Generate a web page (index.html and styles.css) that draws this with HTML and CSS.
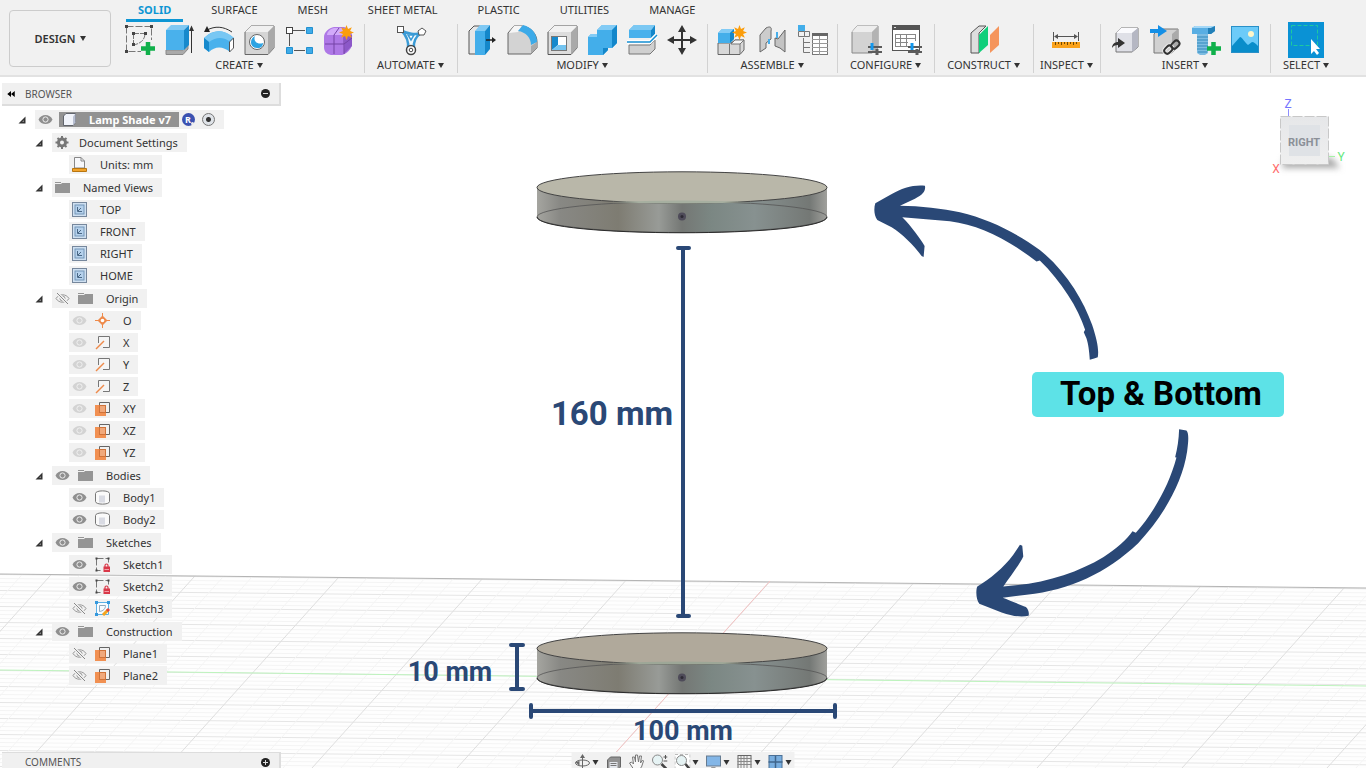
FILE: index.html
```html
<!DOCTYPE html>
<html lang="en">
<head>
  <meta charset="UTF-8" />
  <meta name="viewport" content="width=device-width, initial-scale=1.0" />
  <title>Lamp Shade v7</title>
  <link rel="stylesheet" href="styles.css">
</head>
<body>
  <!-- Shared icons -->
  <svg class="sprite" aria-hidden="true">
    <symbol id="eye" viewBox="0 0 15 15"><path d="M0.500 7.500C3 1.500 12 1.500 14.500 7.500C12 13.500 3 13.500 0.500 7.500Z" fill="#8f8f8f"/><circle cx="7.500" cy="7.500" r="2.600" fill="#8f8f8f" stroke="#eee"/></symbol>
    <symbol id="eye-off" viewBox="0 0 15 15"><path d="M1 7.500C4 2.500 11 2.500 14 7.500C11 12.500 4 12.500 1 7.500Z" fill="none" stroke="#999"/><circle cx="7.500" cy="7.500" r="2.500" fill="none" stroke="#999"/><path d="M2 2L13 13" stroke="#f1f1f1" stroke-width="3"/><path d="M2 2L13 13" stroke="#888"/></symbol>
    <symbol id="folder" viewBox="0 0 15 15"><path d="M0 2h6v1H0zM0 4h6l1-1h8v10H0z" fill="#959595"/></symbol>
    <symbol id="arrow" viewBox="0 0 8 8"><path d="M7.500 0.500V7.500H0.500Z" fill="#333"/><path d="M6 4V6H4Z" fill="#888"/></symbol>
    <symbol id="view" viewBox="0 0 15 15"><rect x="0.500" y="0.500" width="14" height="14" fill="#cfe0f1" stroke="#76879c"/><rect x="3" y="3" width="9" height="9" fill="#b5d1ec" stroke="#7496b8"/><path d="M5.500 5V9.500H10M6 9L9 6" fill="none" stroke="#4a6886"/></symbol>
    <symbol id="axis" viewBox="0 0 15 15"><path d="M3.500 8V1.500H14.500V12.500H8" fill="#f5f5f5" stroke="#777"/><path d="M1 14L9 6" stroke="#ee8a4b" stroke-width="1.500"/></symbol>
    <symbol id="plane" viewBox="0 0 15 15"><path d="M4.500 5V1.500H14.500V11.500H11" fill="none" stroke="#666"/><rect x="0" y="4" width="11" height="11" fill="#f19052"/><rect x="4.500" y="4.500" width="6" height="7" fill="#f0a97c" stroke="#d0733a"/></symbol>
    <symbol id="body" viewBox="0 0 15 15"><path d="M0.500 3.500C0.500 0 14.500 0 14.500 3.500V11.500C14.500 15 0.500 15 0.500 11.500Z" fill="#fafafa" stroke="#777"/><path d="M4 5.500H10V12.500H4Z" fill="#d9dbe3"/></symbol>
    <symbol id="sketch" viewBox="0 0 15 15"><path d="M1.500 1.500H13.500V7M1.500 1.500V13.500H7" fill="none" stroke="#777" stroke-dasharray="7 2"/><path d="M0.500 0.500h2v2h-2zM12.500 0.500h2v2h-2zM0.500 12.500h2v2h-2z" fill="#444"/><path d="M10 10V8.500C10 6.500 13 6.500 13 8.500V10" fill="none" stroke="#d93848" stroke-width="1.200"/><rect x="8.500" y="9.500" width="6.500" height="5.500" fill="#d93848"/><path d="M9.500 12.500h4.500" stroke="#f2a0a8"/></symbol>
    <symbol id="mini-cube" viewBox="0 0 15 15"><path d="M1.500 4L4 1.500H13.500V10.500L11 13.500H1.500Z" fill="#f0f3fa" stroke="#60646c"/><path d="M11 4.500L13.500 1.500V10.500L11 13.500Z" fill="#b9c0d2"/></symbol>
    <symbol id="star" viewBox="0 0 16 16"><path d="M8 0L9.600 4.200L13.700 2.300L11.800 6.400L16 8L11.800 9.600L13.700 13.700L9.600 11.800L8 16L6.400 11.800L2.300 13.700L4.200 9.600L0 8L4.200 6.400L2.300 2.300L6.400 4.200Z" fill="#fb9d0b"/></symbol>
    <symbol id="sliders" viewBox="0 0 14 12"><path d="M0 4H14M0 9H14" stroke="#5b5b5b" stroke-width="2"/><path d="M4 0V7" stroke="#1398ee" stroke-width="3"/><path d="M9 6V12" stroke="#5b5b5b" stroke-width="3"/></symbol>
  </svg>

  <header class="toolbar">
    <button class="workspace-button">DESIGN <span class="caret"></span></button>
    <div class="ribbon">
      <nav class="tabs">
        <a href="#" class="tab active">SOLID</a>
        <a href="#" class="tab">SURFACE</a>
        <a href="#" class="tab">MESH</a>
        <a href="#" class="tab">SHEET METAL</a>
        <a href="#" class="tab">PLASTIC</a>
        <a href="#" class="tab">UTILITIES</a>
        <a href="#" class="tab">MANAGE</a>
      </nav>
      <div class="groups">
        <div class="group">
          <div class="tools">
            <button class="tool" aria-label="Create sketch"><svg viewBox="0 0 32 32"><path d="M3.500 2.500H28.500V16M3.500 2.500V27.500H18" fill="none" stroke="#777" stroke-dasharray="7 2"/><path d="M10.500 21V9.500H22C22 16 17 20 10 21Z" fill="none" stroke="#777" stroke-dasharray="5 1"/><path d="M2 1h3v3h-3zM27 1h3v3h-3zM2 26h3v3h-3zM9 8h3v3h-3zM21 8h3v3h-3zM9 19h3v3h-3z" fill="#444"/><path d="M25 18V31M18 24.500H32" stroke="#10b04b" stroke-width="4.500"/></svg></button>
            <button class="tool" aria-label="Extrude"><svg viewBox="0 0 32 32"><path d="M3 26H20L25 21V25L20 30.500H3Z" fill="#aaa" stroke="#888"/><path d="M3 6L8 1H26L21 6Z" fill="#80c9f3"/><path d="M3 6H21V26H3Z" fill="#49b1ec"/><path d="M21 6L26 1V21L21 26Z" fill="#1689cc"/><path d="M28.500 29V5" stroke="#333"/><path d="M26 7L28.500 1.500L31 7Z" fill="#333"/></svg></button>
            <button class="tool" aria-label="Revolve"><svg viewBox="0 0 32 32"><path d="M1 14L6 10C13 6 21 6 28 12L31 14L27 28C20 22 12 22 6 28L1 24Z" fill="#49b1ec"/><path d="M1 14L6 18C13 13 20 13 26 17L31 14C22 5 10 5 1 14Z" fill="#78c7f3"/><path d="M6 18V28L1 24V14Z" fill="#1689cc"/><path d="M26.500 18L30.500 14V24L26.500 28Z" fill="#fff" stroke="#555"/><path d="M4 6C12 2 20 2 29 8" fill="none" stroke="#333"/><path d="M1 8L4 2L7 8Z" fill="#222"/></svg></button>
            <button class="tool" aria-label="Hole"><svg viewBox="0 0 32 32"><path d="M2 8L8 2H31V24L25 30.500H2Z" fill="#d5d5d5" stroke="#666"/><path d="M2 8L8 2H31L25 8Z" fill="#f0f0f0"/><path d="M25 8L31 2V24L25 30Z" fill="#a9a9a9"/><circle cx="14" cy="18" r="7.500" fill="#fff" stroke="#666"/><path d="M12 12C5 16 8 25 15 24C18 24 20 22 20 19C14 21 10 17 12 12Z" fill="#2da3e2"/></svg></button>
            <button class="tool" aria-label="Pattern"><svg viewBox="0 0 32 32"><path d="M10 6.500H22M6.500 10V22M11 26.500H22" stroke="#555"/><rect x="3.500" y="3.500" width="6" height="6" fill="#fff" stroke="#444"/><path d="M23.500 3.500h6v6h-6zM23.500 23.500h6v6h-6zM3.500 23.500h6v6h-6z" fill="#3eabe8" stroke="#2390cf"/></svg></button>
            <button class="tool" aria-label="Create form"><svg viewBox="0 0 32 32"><path d="M1 13C1 8 6 4 11 3H21C27 5 30 9 29 14V21C28 26 23 30 19 31H8C3 30 1 27 1 23Z" fill="#ae78e6"/><path d="M11 4H20L23 11H4C4 8 7 5 11 4Z" fill="#d2aafa"/><path d="M22 12L29 11V22L21 30Z" fill="#8c58c8"/><path d="M2 20H21L29 14M11 30V11L16 4M21 30V12L26 6" fill="none" stroke="#7443a6"/><use href="#star" x="16" y="1" width="15" height="15"/></svg></button>
          </div>
          <button class="group-label">CREATE <span class="caret"></span></button>
        </div>
        <div class="group">
          <div class="tools">
            <button class="tool" aria-label="Automate"><svg viewBox="0 0 32 32"><path d="M6 6C12 10 21 11 26 9C20 13 18 18 19 25H13C14 18 12 12 6 6Z" fill="#f4fafd" stroke="#3a9bd6" stroke-width="2.500"/><path d="M13 11H19L16 16Z" fill="#fff" stroke="#3a9bd6" stroke-width="1.500"/><rect x="2.500" y="2.500" width="6" height="6" fill="#fff" stroke="#555"/><path d="M27 4L31 7L29 11L24 11L23 7Z" fill="#fff" stroke="#555"/><circle cx="16" cy="26" r="4.500" fill="#fff" stroke="#444" stroke-width="1.500"/><circle cx="16" cy="26" r="1.800" fill="none" stroke="#444"/></svg></button>
          </div>
          <button class="group-label">AUTOMATE <span class="caret"></span></button>
        </div>
        <div class="group">
          <div class="tools">
            <button class="tool" aria-label="Press pull"><svg viewBox="0 0 32 32"><path d="M3 7L8 2H15L10 7V30H3Z" fill="#e7e7e7" stroke="#555"/><path d="M9 7L14 1H24L19 7Z" fill="#7fc9f4"/><path d="M9 7H19V31H9Z" fill="#43aeea"/><path d="M19 7L24 1V25L19 31Z" fill="#1487ca"/><path d="M20 16H27" stroke="#222" stroke-width="1.500"/><path d="M26 13L30 16L26 19Z" fill="#222"/></svg></button>
            <button class="tool" aria-label="Fillet"><svg viewBox="0 0 32 32"><path d="M2 30V9L8 2H16C25 3 31 10 31 18V24L25 30Z" fill="#d3d3d3" stroke="#666"/><path d="M3 9L8 2H16L12 8Z" fill="#f6f6f6"/><path d="M12 7L17 1C26 3 31 10 31 18L25 21C25 14 20 8 12 7Z" fill="#3caae8"/><path d="M25 22L31 18V24L25 30Z" fill="#aaa"/></svg></button>
            <button class="tool" aria-label="Shell"><svg viewBox="0 0 32 32"><path d="M2 8L8 2H31V24L25 30.500H2Z" fill="#ddd" stroke="#555"/><path d="M25 8L31 2V24L25 30Z" fill="#aaa"/><path d="M2 8L8 2H31L25 8Z" fill="#f2f2f2"/><rect x="5.500" y="12.500" width="15" height="14" fill="#fff" stroke="#777"/><path d="M6 13L12 13V21L6 26Z" fill="#1689cc"/><path d="M12 21H20V26H6Z" fill="#74c4f0"/></svg></button>
            <button class="tool" aria-label="Combine"><svg viewBox="0 0 32 32"><path d="M2 13L5 10H11V6L16 1H31V19L26 24H22V26L17 31H2Z" fill="#43aeea"/><path d="M11 6L16 1H31L26 6ZM2 13L5 10H11V13Z" fill="#82cbf5"/><path d="M26 6L31 1V19L26 24ZM17 24H22V26L17 31Z" fill="#1487ca"/></svg></button>
            <button class="tool" aria-label="Split"><svg viewBox="0 0 32 32"><path d="M3 6L8 1H29L25 6V14H3Z" fill="#49b1ec"/><path d="M25 6L29 1V10L25 14Z" fill="#1487ca"/><path d="M3 6L8 1H29L25 6Z" fill="#7bc8f3"/><path d="M3 21H24L29 16V25L24 30H3Z" fill="#d0d0d0" stroke="#777"/><path d="M1 18H24L31 11" fill="none" stroke="#fff" stroke-width="4"/><path d="M1 18H24L31 11" fill="none" stroke="#158fd2" stroke-width="1.500"/></svg></button>
            <button class="tool" aria-label="Move"><svg viewBox="0 0 32 32"><path d="M16 6V26M6 16H26" stroke="#333" stroke-width="2"/><path d="M12 8L16 1L20 8ZM12 24L16 31L20 24ZM8 12L1 16L8 20ZM24 12L31 16L24 20Z" fill="#333"/></svg></button>
          </div>
          <button class="group-label">MODIFY <span class="caret"></span></button>
        </div>
        <div class="group">
          <div class="tools">
            <button class="tool" aria-label="New component"><svg viewBox="0 0 32 32"><path d="M2 19H15L19 16H28V26L24 30.500H2Z" fill="#d8d8d8" stroke="#666"/><path d="M15 20L19 16H28L24 20Z" fill="#f6f6f6" stroke="#777"/><path d="M13.500 20V30M24 20V30" stroke="#777"/><path d="M2 9L6 5H18V15L14 19H2Z" fill="#43aeea"/><path d="M2 9L6 5H18L14 9Z" fill="#82cbf5"/><path d="M14 9L18 5V15L14 19Z" fill="#1487ca"/><use href="#star" x="16" y="1" width="15" height="15"/></svg></button>
            <button class="tool" aria-label="Joint"><svg viewBox="0 0 32 32"><path d="M4 11L10 4C14 2 16 3 15 7V15L10 19V24L4 28Z" fill="#ccc" stroke="#666"/><path d="M29 6V28L24 24L19 22V14L22 15Z" fill="#c3c3c3" stroke="#666"/><path d="M13 15V20M21 8V14" stroke="#48aeea" stroke-width="2"/></svg></button>
            <button class="tool" aria-label="Joint table"><svg viewBox="0 0 32 32"><rect x="2" y="1" width="7" height="6" fill="#43aeea"/><path d="M2.500 7.500h6v5h-6zM8.500 7.500h5v5h-5zM7.500 14V28.500H14M7 18.500H14M7 23.500H14" fill="none" stroke="#777"/><rect x="16.500" y="9.500" width="15" height="21" fill="#fff" stroke="#777"/><path d="M16 9h16v3H16z" fill="#666"/><path d="M16 15.500H32M16 19.500H32M16 23.500H32M16 27.500H32M23.500 12V31" stroke="#999"/></svg></button>
          </div>
          <button class="group-label">ASSEMBLE <span class="caret"></span></button>
        </div>
        <div class="group">
          <div class="tools">
            <button class="tool" aria-label="Configure model"><svg viewBox="0 0 32 32"><path d="M2 8L7 2H28V24L22 29H2Z" fill="#d3d3d3" stroke="#888"/><path d="M2 8L7 2H28L22 8Z" fill="#eee"/><path d="M22 8L28 2V24L22 29Z" fill="#b3b3b3"/><use href="#sliders" x="18" y="19" width="14" height="12"/></svg></button>
            <button class="tool" aria-label="Configuration table"><svg viewBox="0 0 32 32"><rect x="2.500" y="1.500" width="27" height="25" fill="#fff" stroke="#555"/><path d="M2 1h28v5H2z" fill="#555"/><path d="M4 3.500H6" stroke="#ddd"/><path d="M5 10.500H26M5 14.500H26M5 18.500H18M5 22.500H18M5.500 10V23M10.500 10V23M16.500 10V23M25.500 10V17" fill="none" stroke="#888"/><use href="#sliders" x="18" y="19" width="14" height="12"/></svg></button>
          </div>
          <button class="group-label">CONFIGURE <span class="caret"></span></button>
        </div>
        <div class="group">
          <div class="tools">
            <button class="tool" aria-label="Offset plane"><svg viewBox="0 0 32 32"><path d="M3 9L11 2H18L11 9V29H3Z" fill="#dedede" stroke="#555"/><path d="M11 11L20 2V21L11 29Z" fill="#10cf7b"/><path d="M22 11L31 2V21L22 29Z" fill="#f5955c"/></svg></button>
          </div>
          <button class="group-label">CONSTRUCT <span class="caret"></span></button>
        </div>
        <div class="group compact">
          <div class="tools">
            <button class="tool" aria-label="Measure"><svg viewBox="0 0 32 32"><path d="M3.500 8V17M28.500 8V17M5 12.500H27" stroke="#555"/><path d="M4 12.500L8 10V15ZM28 12.500L24 10V15Z" fill="#555"/><rect x="2" y="18" width="28" height="6" fill="#faa21b"/><path d="M5.500 18v3M8.500 18v2M11.500 18v3M14.500 18v2M17.500 18v3M20.500 18v2M23.500 18v3M26.500 18v2" stroke="#704800"/></svg></button>
          </div>
          <button class="group-label">INSPECT <span class="caret"></span></button>
        </div>
        <div class="group">
          <div class="tools">
            <button class="tool" aria-label="Insert derive"><svg viewBox="0 0 32 32"><path d="M7 9L12 4H29V23L23 28H7Z" fill="#dfe0e7" stroke="#777"/><path d="M7 9L12 4H29L23 9Z" fill="#fafafd"/><path d="M23 9L29 4V23L23 28Z" fill="#b5b7c3"/><path d="M3 24C3 20 6 18 9 18V14L16 19L9 24V21C6 21 4 22 3 24Z" fill="#333"/></svg></button>
            <button class="tool" aria-label="Insert link"><svg viewBox="0 0 32 32"><path d="M5 10L10 5H29V22L23 29H5Z" fill="#d1d1d1" stroke="#777"/><path d="M23 10L29 5V22L23 29Z" fill="#aaa"/><path d="M1 7H10" stroke="#148fe6" stroke-width="4"/><path d="M9 1L18 7L9 13Z" fill="#148fe6"/><g fill="none"><rect x="15" y="23" width="9" height="6" rx="3" transform="rotate(-45 19 26)" stroke="#eee" stroke-width="4"/><rect x="15" y="23" width="9" height="6" rx="3" transform="rotate(-45 19 26)" stroke="#333" stroke-width="2"/><rect x="22" y="18" width="9" height="6" rx="3" transform="rotate(-45 26 21)" stroke="#333" stroke-width="2"/></g></svg></button>
            <button class="tool" aria-label="Insert fastener"><svg viewBox="0 0 32 32"><path d="M3 4L6 2H26V7L22 10H3Z" fill="#59aee3"/><path d="M3 4L6 2H26L22 4Z" fill="#a5d8f7"/><path d="M19 4H22L26 2V7L22 10H19Z" fill="#2380b8"/><path d="M8 10H19V29L16 31H11L8 29Z" fill="#7dbce2"/><path d="M8 13H19M8 16H19M8 19H19M8 22H19M8 25H19M9 28H18" stroke="#3389bc"/><path d="M24.500 18V31M18 24.500H32" stroke="#10b04b" stroke-width="4.500"/></svg></button>
            <button class="tool" aria-label="Insert image"><svg viewBox="0 0 32 32"><rect x="2.500" y="2.500" width="27" height="26" fill="#6ccbf9" stroke="#2990c8"/><circle cx="22" cy="10" r="3" fill="#fff6c9"/><path d="M3 22L11 13C13 13 17 20 19 21L23 18C25 18 27 20 29 22V28H3Z" fill="#098dca"/></svg></button>
          </div>
          <button class="group-label">INSERT <span class="caret"></span></button>
        </div>
        <div class="group">
          <div class="tools">
            <button class="tool selected" aria-label="Select"><svg viewBox="0 0 36 36"><rect x="3.500" y="3.500" width="26" height="20" fill="none" stroke="#1dc9a0" stroke-dasharray="4 2"/><path d="M23 17V32L26 29L29 33L31 31L28 27H32Z" fill="#fff"/></svg></button>
          </div>
          <button class="group-label">SELECT <span class="caret"></span></button>
        </div>
      </div>
    </div>
  </header>

  <main class="workspace">
    <!-- Model canvas -->
    <svg class="canvas" viewBox="0 77 1366 691" preserveAspectRatio="xMidYMid slice">
      <defs>
        <linearGradient id="side">
          <stop offset="0" stop-color="#a5a5a0"/><stop offset="0.080" stop-color="#888884"/><stop offset="0.280" stop-color="#7e7c72"/><stop offset="0.420" stop-color="#989b97"/><stop offset="0.500" stop-color="#747774"/><stop offset="0.600" stop-color="#7b8783"/><stop offset="0.750" stop-color="#879190"/><stop offset="0.940" stop-color="#747875"/><stop offset="1" stop-color="#a0a09c"/>
        </linearGradient>
        <pattern id="rows" width="1366" height="16" y="574" patternUnits="userSpaceOnUse" patternTransform="skewY(0.600)">
          <path d="M0 4.500H1366M0 8.500H1366M0 12.500H1366" stroke="#f4f4f4"/>
          <path d="M0 0.500H1366" stroke="#e5e5e5"/>
        </pattern>
        <pattern id="columns" width="145" height="200" x="568" patternUnits="userSpaceOnUse" patternTransform="skewX(-42)">
          <path d="M29.500 0V200M58.500 0V200M87.500 0V200M116.500 0V200" stroke="#f4f4f4"/>
          <path d="M0.500 0V200" stroke="#dedede"/>
        </pattern>
        <g id="disc">
          <path d="M537 188V217C537 238 827 238 827 217V188Z" fill="url(#side)"/>
          <ellipse cx="682" cy="217" rx="145" ry="15.500" fill="none" stroke="#555" stroke-width="0.800"/>
          <path d="M537 217C540 238 824 238 827 217" fill="none" stroke="#2c2c2c"/>
        </g>
      </defs>
      <path d="M0 574L1366 588V768H0Z" fill="#fefefe"/>
      <path d="M0 574L1366 588V768H0Z" fill="url(#rows)"/>
      <path d="M0 574L1366 588V768H0Z" fill="url(#columns)"/>
      <path d="M0 574L1366 588" stroke="#b4b4b4"/>
      <path d="M0 670L1366 686" stroke="#bdf3bd"/>
      <path d="M770 581L602 768" stroke="#f5c3c3"/>

      <use href="#disc"/>
      <ellipse cx="682" cy="187.500" rx="145" ry="15.700" fill="#b9b7a9" stroke="#444"/>
      <path d="M610 202Q682 199 750 202Q682 205 610 202Z" fill="#a6afa0"/>
      <circle cx="682" cy="216.500" r="4" fill="#4e4b59"/><circle cx="682" cy="216.500" r="1.500" fill="#2c2933"/>
      <use href="#disc" y="461"/>
      <ellipse cx="682" cy="648.500" rx="145" ry="15.700" fill="#b0a99b" stroke="#444"/>
      <path d="M610 663Q682 660 750 663Q682 666 610 663Z" fill="#9da797"/>
      <circle cx="682" cy="677.500" r="4" fill="#4e4b59"/><circle cx="682" cy="677.500" r="1.500" fill="#2c2933"/>

      <!-- Dimensions -->
      <g class="dimension">
        <path d="M683 248V616M678 248H689M678 616H689"/>
        <path d="M517 645V689M511 645H523M511 689H523"/>
        <path d="M531 711H835M531 705V717M835 705V717"/>
      </g>
      <text class="measure large" x="612" y="425">160 mm</text>
      <text class="measure" x="450" y="681">10 mm</text>
      <text class="measure" x="683" y="740">100 mm</text>

      <!-- Callout -->
      <path class="pointer" transform="translate(860 170) scale(0.333)" d="M46 100L90 75C130 52 160 44 195 47C198 62 190 74 165 86L120 107C180 108 250 115 300 127C390 148 470 190 540 240C620 305 670 390 697 465C712 510 718 540 714 562L703 566L690 570C689 545 685 520 680 505L672 487L676 480C655 415 605 335 540 272L530 275C450 212 360 165 270 154L127 142C155 170 180 205 194 228L191 261L185 258C160 225 125 190 95 172L52 150C42 138 41 115 46 100Z"/>
      <path class="pointer" transform="translate(960 360) scale(0.333)" d="M658 208L680 212C688 220 686 245 682 275C668 370 610 470 535 550C440 640 330 690 200 705L128 714C150 722 180 735 198 742C206 750 208 760 206 768C185 773 160 770 125 758L58 732C48 720 47 690 52 680C90 658 130 625 160 585L180 555L187 558L190 590C180 612 155 645 130 680C250 672 350 640 430 592C470 566 500 540 518 514L528 519C585 455 630 370 650 293L646 292C653 265 657 240 658 208Z"/>
      <rect x="1032" y="372" width="252" height="45" rx="5" fill="#5de2e7"/>
      <text class="callout" x="1161" y="405">Top &amp; Bottom</text>
    </svg>

    <aside class="sidebar">
      <div class="panel-header">
        <svg class="collapse" viewBox="0 0 10 8"><path d="M5 0V8L0 4ZM10 0V8L5 4Z"/></svg>
        <h2>BROWSER</h2>
        <button class="panel-button" aria-label="Minimize browser"><svg viewBox="0 0 9 9"><circle cx="4.500" cy="4.500" r="4.500"/><path d="M2 4.500H7" stroke="#ddd"/></svg></button>
      </div>

      <ul class="tree">
        <li>
          <div class="row">
            <button class="toggle" aria-label="Collapse"><svg><use href="#arrow"/></svg></button>
            <div class="chip root">
              <svg class="icon"><use href="#eye"/></svg>
              <span class="document"><svg class="icon"><use href="#mini-cube"/></svg>Lamp Shade v7</span>
              <svg class="badge" viewBox="0 0 13 13"><circle cx="6.500" cy="6.500" r="6.500" fill="#3b51b0"/><text x="6" y="10">R</text><circle cx="10.500" cy="10.500" r="1.500" fill="#eee"/></svg>
              <input type="radio" class="activate" aria-label="Activate component" checked>
            </div>
          </div>
          <ul class="level-one">
            <li>
              <div class="row">
                <button class="toggle" aria-label="Collapse"><svg><use href="#arrow"/></svg></button>
                <div class="chip settings"><svg class="icon" viewBox="0 0 15 15"><circle cx="7" cy="7.500" r="3.500" fill="none" stroke="#777" stroke-width="3"/><path d="M7 1V4M7 11V14M0.500 7.500H3M11 7.500H13.500M2.500 3L4 4.500M10 10.500L11.500 12M11.500 3L10 4.500M2.500 12L4 10.500" stroke="#777" stroke-width="2"/></svg>Document Settings</div>
              </div>
              <ul class="level-two">
                <li class="chip"><svg class="icon" viewBox="0 0 15 15"><path d="M2.500 11V0.500H9L12.500 4V11Z" fill="#f7f8fb" stroke="#888"/><path d="M9 0.500V4H12.500" fill="none" stroke="#888"/><path d="M0.500 11.500H14.500V14.500H0.500Z" fill="#f2a32a" stroke="#b87611"/></svg>Units: mm</li>
              </ul>
            </li>
            <li>
              <div class="row">
                <button class="toggle" aria-label="Collapse"><svg><use href="#arrow"/></svg></button>
                <div class="chip"><svg class="icon"><use href="#folder"/></svg>Named Views</div>
              </div>
              <ul class="level-two">
                <li class="chip"><svg class="icon"><use href="#view"/></svg>TOP</li>
                <li class="chip"><svg class="icon"><use href="#view"/></svg>FRONT</li>
                <li class="chip"><svg class="icon"><use href="#view"/></svg>RIGHT</li>
                <li class="chip"><svg class="icon"><use href="#view"/></svg>HOME</li>
              </ul>
            </li>
            <li>
              <div class="row">
                <button class="toggle" aria-label="Collapse"><svg><use href="#arrow"/></svg></button>
                <div class="chip"><svg class="icon eye"><use href="#eye-off"/></svg><svg class="icon"><use href="#folder"/></svg>Origin</div>
              </div>
              <ul class="level-two">
                <li class="chip"><svg class="icon eye faded"><use href="#eye"/></svg><svg class="icon" viewBox="0 0 15 15"><path d="M7.500 0V15M0 7.500H15" stroke="#ee8a4b"/><path d="M7.500 2.500L12.500 7.500L7.500 12.500L2.500 7.500Z" fill="#ee8a4b"/><circle cx="7.500" cy="7.500" r="1.800" fill="#fff"/></svg>O</li>
                <li class="chip"><svg class="icon eye faded"><use href="#eye"/></svg><svg class="icon"><use href="#axis"/></svg>X</li>
                <li class="chip"><svg class="icon eye faded"><use href="#eye"/></svg><svg class="icon"><use href="#axis"/></svg>Y</li>
                <li class="chip"><svg class="icon eye faded"><use href="#eye"/></svg><svg class="icon"><use href="#axis"/></svg>Z</li>
                <li class="chip"><svg class="icon eye faded"><use href="#eye"/></svg><svg class="icon"><use href="#plane"/></svg>XY</li>
                <li class="chip"><svg class="icon eye faded"><use href="#eye"/></svg><svg class="icon"><use href="#plane"/></svg>XZ</li>
                <li class="chip"><svg class="icon eye faded"><use href="#eye"/></svg><svg class="icon"><use href="#plane"/></svg>YZ</li>
              </ul>
            </li>
            <li>
              <div class="row">
                <button class="toggle" aria-label="Collapse"><svg><use href="#arrow"/></svg></button>
                <div class="chip"><svg class="icon eye"><use href="#eye"/></svg><svg class="icon"><use href="#folder"/></svg>Bodies</div>
              </div>
              <ul class="level-two">
                <li class="chip"><svg class="icon eye"><use href="#eye"/></svg><svg class="icon"><use href="#body"/></svg>Body1</li>
                <li class="chip"><svg class="icon eye"><use href="#eye"/></svg><svg class="icon"><use href="#body"/></svg>Body2</li>
              </ul>
            </li>
            <li>
              <div class="row">
                <button class="toggle" aria-label="Collapse"><svg><use href="#arrow"/></svg></button>
                <div class="chip"><svg class="icon eye"><use href="#eye"/></svg><svg class="icon"><use href="#folder"/></svg>Sketches</div>
              </div>
              <ul class="level-two">
                <li class="chip"><svg class="icon eye"><use href="#eye"/></svg><svg class="icon"><use href="#sketch"/></svg>Sketch1</li>
                <li class="chip"><svg class="icon eye"><use href="#eye"/></svg><svg class="icon"><use href="#sketch"/></svg>Sketch2</li>
                <li class="chip"><svg class="icon eye"><use href="#eye-off"/></svg><svg class="icon" viewBox="0 0 15 15"><path d="M1.500 1.500H13.500V13.500H1.500Z" fill="#f7fbff" stroke="#5ab0e6"/><path d="M4.500 10.500V4.500H10.500C10.500 8 8 10 4.500 10.500Z" fill="none" stroke="#8fa9bd"/><path d="M0 0h3v3H0zM12 0h3v3h-3zM0 12h3v3H0z" fill="#3598dc"/><path d="M8 14L13 9" stroke="#f4a51f" stroke-width="3"/><path d="M12 10L14 8" stroke="#e0453f" stroke-width="3"/></svg>Sketch3</li>
              </ul>
            </li>
            <li>
              <div class="row">
                <button class="toggle" aria-label="Collapse"><svg><use href="#arrow"/></svg></button>
                <div class="chip"><svg class="icon eye"><use href="#eye"/></svg><svg class="icon"><use href="#folder"/></svg>Construction</div>
              </div>
              <ul class="level-two">
                <li class="chip"><svg class="icon eye"><use href="#eye-off"/></svg><svg class="icon"><use href="#plane"/></svg>Plane1</li>
                <li class="chip"><svg class="icon eye"><use href="#eye-off"/></svg><svg class="icon"><use href="#plane"/></svg>Plane2</li>
              </ul>
            </li>
          </ul>
        </li>
      </ul>

      <div class="panel-header comments">
        <h2>COMMENTS</h2>
        <button class="panel-button" aria-label="Expand comments"><svg viewBox="0 0 9 9"><circle cx="4.500" cy="4.500" r="4.500"/><path d="M2 4.500H7M4.500 2V7" stroke="#ddd"/></svg></button>
      </div>
    </aside>

    <svg class="view-cube" viewBox="0 0 80 84">
      <defs>
        <linearGradient id="cube-face" x2="0" y2="1"><stop offset="0" stop-color="#e6e7e9"/><stop offset="1" stop-color="#efefef"/></linearGradient>
        <filter id="cube-shadow" x="-20%" y="-100%" width="140%" height="300%"><feGaussianBlur stdDeviation="3"/></filter>
      </defs>
      <path d="M18 62H66L74 72H16Z" fill="#aaa" filter="url(#cube-shadow)"/>
      <path d="M22.500 13V20" stroke="#8e8eff"/><path d="M63 60.500H69" stroke="#a6f0a6"/>
      <rect x="14.500" y="20.500" width="48" height="48" fill="url(#cube-face)" stroke="#c8c8c8" stroke-dasharray="10 2"/>
      <rect x="23" y="29" width="31" height="31" fill="#dfe2e6"/>
      <text x="38" y="50" class="cube-label">RIGHT</text>
      <text x="22" y="12" fill="#7474ff">Z</text>
      <text x="10" y="77" fill="#ff6c6c">X</text>
      <text x="75" y="65" fill="#66e87e">Y</text>
    </svg>

    <div class="nav-bar">
      <button aria-label="Orbit"><svg viewBox="0 0 16 16"><ellipse cx="8" cy="9" rx="7" ry="3" fill="none" stroke="#666"/><path d="M8 2V15" stroke="#666"/><path d="M5.500 4L8 0L10.500 4ZM1 8L5 7V12Z" fill="#666"/></svg><span class="caret"></span></button>
      <button aria-label="Look at"><svg viewBox="0 0 16 16"><path d="M2 6L5 3H15V13L13 15H2Z" fill="#929292" stroke="#666"/><path d="M4 8H12V14H4Z" fill="#e3e6ec"/><path d="M5 9.500H11M5 11.500H11" stroke="#777"/></svg></button>
      <button aria-label="Pan"><svg viewBox="0 0 16 16"><path d="M5 15L1 9L3 8L5 10L4 3L6 3L7 8L7 1H9L10 8L11 2H13L12 9L14 6L15 7L13 13L11 15Z" fill="#f8f8f8" stroke="#777"/></svg></button>
      <button aria-label="Zoom"><svg viewBox="0 0 16 16"><circle cx="6" cy="6" r="5" fill="#e6f3f4" stroke="#888"/><path d="M10 10L15 15" stroke="#444" stroke-width="2.500"/><path d="M12 3H16M14 1V5M12 7H16" stroke="#555"/></svg></button>
      <button aria-label="Fit"><svg viewBox="0 0 16 16"><path d="M0.500 0.500H15.500V15.500H0.500Z" fill="#fff" stroke="#bbb" stroke-dasharray="3 2"/><circle cx="7" cy="6.500" r="5" fill="#e6f3f4" stroke="#888"/><path d="M11 10L15 15" stroke="#444" stroke-width="2.500"/></svg><span class="caret"></span></button>
      <button aria-label="Display settings"><svg viewBox="0 0 16 16"><rect x="1" y="2" width="14" height="10" fill="#83b6e7" stroke="#667b90"/><path d="M6 13H10V15H5" fill="#999"/></svg><span class="caret"></span></button>
      <button aria-label="Grid and snaps"><svg viewBox="0 0 16 16"><rect x="1.500" y="1.500" width="13" height="14" fill="#eee" stroke="#666"/><path d="M4.500 2V16M7.500 2V16M10.500 2V16M1 4.500H15M1 7.500H15M1 10.500H15" stroke="#888"/></svg><span class="caret"></span></button>
      <button aria-label="Viewports"><svg viewBox="0 0 16 16"><rect x="1.500" y="1.500" width="13" height="13" fill="#79aedf" stroke="#4b7096"/><path d="M8 2V15M1 8H15" stroke="#3f658c" stroke-width="1.500"/></svg><span class="caret"></span></button>
    </div>
  </main>
</body>
</html>
```
FILE: styles.css
```css
* {
  margin: 0;
  padding: 0;
  box-sizing: border-box;
}

body {
  font-family: 'Noto Sans', sans-serif;
  font-size: 11px;
  color: #333;
  background: #fff;
  display: flex;
  flex-direction: column;
  height: 100vh;
  overflow: hidden;
}

button {
  font: inherit;
  color: inherit;
  background: none;
  border: none;
  cursor: pointer;
}

ul {
  list-style: none;
}

svg {
  display: block;
  flex-shrink: 0;
}

.sprite {
  position: absolute;
  width: 0;
  height: 0;
}

.caret {
  display: inline-block;
  border: 3px solid transparent;
  border-top: 5px solid #333;
  border-bottom: none;
}

/* Toolbar */
.toolbar {
  display: flex;
  gap: 4px;
  background: #f1f1f1;
  border-bottom: 2px solid #e2e2e2;
  padding-left: 9px;
  white-space: nowrap;
}

.workspace-button {
  width: 102px;
  height: 57px;
  margin-top: 10px;
  flex-shrink: 0;
  border: 1px solid #ccc;
  border-radius: 4px;
  font-weight: 600;
  display: flex;
  align-items: center;
  justify-content: center;
  gap: 4px;
}

.tabs {
  display: flex;
  gap: 16px;
  padding-left: 11px;
}

.tab {
  color: #333;
  text-decoration: none;
  line-height: 19px;
  padding: 0 12px;
  border-bottom: 3px solid transparent;
}

.tab.active {
  color: #0d96d4;
  font-weight: 700;
  border-color: #0d96d4;
}

.groups {
  display: flex;
  padding-bottom: 2px;
}

.group {
  display: flex;
  flex-direction: column;
  flex-shrink: 0;
  align-items: center;
  padding: 0 5px 0 4px;
  margin-top: 2px;
  height: 49px;
  border-right: 1px solid #d2d2d2;
}

.group:last-child {
  border-right: none;
}

.tools {
  display: flex;
  height: 34px;
}

.tool {
  width: 40px;
  height: 32px;
  display: flex;
  align-items: center;
  justify-content: center;
}

.tool svg {
  width: 32px;
  height: 32px;
}

.tool.selected svg {
  width: 36px;
  height: 36px;
  background: #0a92d5;
}

.group-label {
  display: flex;
  align-items: center;
  gap: 3px;
  line-height: 18px;
  padding: 0 8px;
}

.compact .group-label {
  padding: 0 2px;
}

/* Workspace */
.workspace {
  position: relative;
  flex: 1;
  min-height: 0;
  display: flex;
  overflow: hidden;
}

.canvas {
  position: absolute;
  inset: 0;
  width: 100%;
  height: 100%;
}

.dimension {
  fill: none;
  stroke: #2a4876;
  stroke-width: 4px;
  stroke-linecap: round;
}

.pointer {
  fill: #2a4876;
}

.measure,
.callout {
  font-family: Roboto, sans-serif;
  font-size: 27px;
  font-weight: 700;
  text-anchor: middle;
  fill: #2a4876;
}

.measure.large,
.callout {
  font-size: 33px;
}

.callout {
  fill: #000;
}

/* Browser panel */
.sidebar {
  position: relative;
  width: 281px;
  padding: 6px 0 0 2px;
  display: flex;
  flex-direction: column;
}

.panel-header {
  display: flex;
  align-items: center;
  height: 23px;
  padding: 0 9px 0 4px;
  background: #f0f0f0;
  border: 1px solid #ddd;
  border-width: 0 2px 2px 0;
}

.panel-header h2 {
  font-size: 10px;
  font-weight: 400;
  line-height: 12px;
  color: #555;
  margin-left: 9px;
}

.collapse {
  width: 10px;
  height: 6px;
}

.panel-button {
  margin-left: auto;
}

.panel-button svg {
  width: 9px;
  height: 9px;
  fill: #222;
}

.comments {
  margin-top: auto;
  height: 16px;
  padding-top: 3px;
  border-width: 1px 2px 0 0;
}

.comments h2 {
  margin-left: 19px;
}

.tree {
  padding: 4px 0 0 16px;
}

.row {
  display: flex;
  align-items: center;
  margin-bottom: 3px;
}

.toggle {
  margin-right: 9px;
}

.toggle svg {
  width: 8px;
  height: 8px;
}

.chip {
  display: flex;
  align-items: center;
  width: max-content;
  height: 19px;
  padding: 0 9px 0 3px;
  background: #f1f1f1;
}

.icon {
  width: 15px;
  height: 15px;
  margin-right: 13px;
}

.icon.eye {
  margin-right: 8px;
}

.faded {
  opacity: 0.3;
}

.settings .icon {
  margin-right: 9px;
}

.level-one {
  padding-left: 17px;
}

.level-one > li {
  padding-top: 1px;
}

.level-two {
  padding-left: 34px;
}

.level-two .chip {
  margin-bottom: 3px;
}

.root .icon {
  margin-right: 6px;
}

.document {
  display: flex;
  align-items: center;
  height: 15px;
  padding: 0 8px 0 3px;
  background: #929292;
  color: #fff;
  font-weight: 700;
}

.document .icon {
  margin-right: 12px;
}

.badge {
  width: 13px;
  height: 13px;
  margin: 0 7px 0 3px;
}

.badge text {
  font-size: 9px;
  font-weight: 700;
  text-anchor: middle;
  fill: #fff;
}

.activate {
  appearance: none;
  width: 13px;
  height: 13px;
  border: 1px solid #777;
  border-radius: 50%;
  background: radial-gradient(#333 0 2px, #dfe3e8 3px);
}

/* Overlays */
.view-cube {
  position: absolute;
  top: 19px;
  right: 20px;
  width: 80px;
  height: 84px;
  overflow: visible;
}

.view-cube text {
  font-family: Roboto, sans-serif;
  font-size: 12px;
  text-anchor: middle;
}

.view-cube .cube-label {
  font-size: 11px;
  font-weight: 700;
  fill: #8b9098;
}

.nav-bar {
  position: absolute;
  bottom: 0;
  left: 50%;
  transform: translateX(-50%);
  display: flex;
  gap: 7px;
  height: 16px;
  padding: 2px 3px 0;
  background: #f1f1f1;
  overflow: hidden;
}

.nav-bar button {
  display: flex;
  align-items: center;
  gap: 2px;
  height: 16px;
}

.nav-bar svg {
  width: 16px;
  height: 16px;
}
```
